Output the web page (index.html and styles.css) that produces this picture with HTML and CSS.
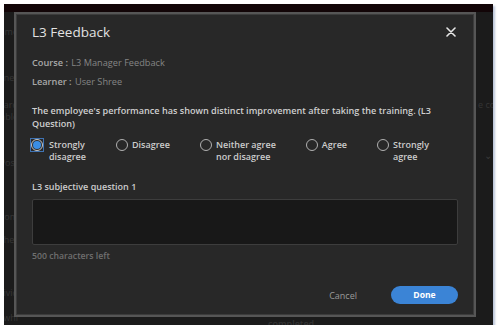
FILE: index.html
```html
<!DOCTYPE html>
<html lang="en">
<head>
<meta charset="utf-8">
<title>L3 Feedback</title>
<link rel="stylesheet" href="styles.css">
</head>
<body>
<div class="frame">
  <div class="topbar"></div>
  <div class="backdrop">
    <div class="bg-left">
      <span class="bg-line l1">Course name</span>
      <span class="bg-line l2">Learner</span>
      <span class="bg-line l3">Board</span>
      <span class="bg-line l4">Table</span>
      <span class="bg-line l5">Post</span>
      <span class="bg-line l6">From</span>
      <span class="bg-line l7">Other</span>
      <span class="bg-line l8">Individ</span>
      <span class="bg-line l9">Ywhi</span>
    </div>
    <div class="bg-right">
      <span class="bg-line r1">e co</span>
      <span class="bg-chev">&#8964;</span>
    </div>
    <div class="bg-bottom">completed</div>
  </div>

  <div class="modal" role="dialog" aria-labelledby="dlg-title">
    <div class="modal-head">
      <h1 id="dlg-title" class="modal-title">L3 Feedback</h1>
      <button class="close" aria-label="Close">
        <svg width="10" height="10" viewBox="0 0 10 10"><path d="M1 1 L9 9 M9 1 L1 9" stroke="#e6e6e6" stroke-width="1.6" stroke-linecap="round"/></svg>
      </button>
    </div>

    <div class="meta">
      <div class="meta-row"><span class="meta-label">Course :</span> <span class="meta-value">L3 Manager Feedback</span></div>
      <div class="meta-row second"><span class="meta-label">Learner :</span> <span class="meta-value">User Shree</span></div>
    </div>

    <p class="question">The employee's performance has shown distinct improvement after taking the training. (L3 Question)</p>

    <div class="options">
      <label class="option selected"><span class="radio-focus"><span class="radio checked"></span></span><span class="opt-text">Strongly<br>disagree</span></label>
      <label class="option"><span class="radio"></span><span class="opt-text">Disagree</span></label>
      <label class="option"><span class="radio"></span><span class="opt-text">Neither agree<br>nor disagree</span></label>
      <label class="option"><span class="radio"></span><span class="opt-text">Agree</span></label>
      <label class="option"><span class="radio"></span><span class="opt-text">Strongly<br>agree</span></label>
    </div>

    <div class="subj-label">L3 subjective question 1</div>
    <div class="textarea"></div>
    <div class="chars-left">500 characters left</div>

    <div class="actions">
      <button class="btn-cancel">Cancel</button>
      <button class="btn-done">Done</button>
    </div>
  </div>
</div>
</body>
</html>
```

FILE: styles.css
```css
* { box-sizing: border-box; }

html, body {
  margin: 0;
  padding: 0;
  background: #ffffff;
}

body {
  font-family: "Open Sans", "Noto Sans", sans-serif;
}

.frame {
  position: relative;
  margin: 4px 0 0 4px;
  width: 489px;
  height: 321px;
  overflow: hidden;
  background: #1b1b1b;
  box-shadow: 2px 2px 2px rgba(140, 158, 190, 0.6);
}

.topbar {
  height: 8px;
  background: #120507;
}

.backdrop {
  position: relative;
  height: 313px;
  color: #353535;
  font-size: 9px;
}

.bg-left {
  display: flex;
  flex-direction: column;
  align-items: flex-end;
  width: 14px;
  padding-top: 14px;
}

.bg-line { display: block; line-height: 12px; white-space: nowrap; }
.l2 { margin-top: 34px; }
.l3 { margin-top: 15px; }
.l4 { margin-top: 0; }
.l5 { margin-top: 34px; }
.l6 { margin-top: 42px; }
.l7 { margin-top: 11px; }
.l8 { margin-top: 41px; }
.l9 { margin-top: 13px; }

.bg-right {
  position: absolute;
  left: 474px;
  top: 87px;
  display: flex;
  flex-direction: column;
}
.bg-chev {
  margin: 38px 0 0 6px;
  font-size: 10px;
  line-height: 12px;
  color: #3a3a3a;
}

.bg-bottom {
  position: absolute;
  left: 264px;
  top: 305px;
  font-size: 9px;
  font-weight: 600;
  color: #333;
}

.modal {
  position: absolute;
  left: 10px;
  top: 8px;
  width: 462px;
  height: 305px;
  background: #282828;
  border: 2px solid #565656;
  box-shadow: inset 0 0 0 1px #3c3c3c;
  display: flex;
  flex-direction: column;
  padding: 9px 16px 11px 16px;
}

.modal-head {
  display: flex;
  justify-content: space-between;
  align-items: center;
  height: 18px;
}

.modal-title {
  margin: 0;
  font-size: 13.5px;
  line-height: 18px;
  font-weight: 500;
  color: #e2e2e2;
}

.close {
  background: none;
  border: 0;
  padding: 0;
  margin-right: 2px;
  width: 10px;
  height: 10px;
  display: flex;
}

.meta {
  margin-top: 15px;
  font-size: 9.2px;
  line-height: 13px;
}
.meta-row.second { margin-top: 6px; }
.meta-label { color: #a8a8a8; font-weight: 600; }
.meta-value { color: #858585; margin-left: 1px; }

.question {
  margin: 16px 0 0 0;
  font-size: 9.1px;
  line-height: 13px;
  font-weight: 600;
  color: #cfcfcf;
}

.options {
  display: flex;
  gap: 30px;
  margin-top: 9px;
  font-size: 9px;
  line-height: 12px;
  font-weight: 600;
  color: #cccccc;
}

.option {
  display: flex;
  align-items: flex-start;
  gap: 4px;
}

.radio {
  flex: none;
  width: 12px;
  height: 12px;
  border: 1px solid #b0b0b0;
  border-radius: 50%;
  display: flex;
  align-items: center;
  justify-content: center;
}

.radio.checked {
  border-color: #c8c8c8;
}
.radio.checked::after {
  content: "";
  width: 8px;
  height: 8px;
  border-radius: 50%;
  background: #3b8ee3;
}

.radio-focus {
  flex: none;
  margin: -1px 1px 0 -2px;
  padding: 0;
  border: 1px solid #3f73b3;
}

.subj-label {
  margin-top: 17px;
  font-size: 9px;
  line-height: 13px;
  font-weight: 600;
  color: #cccccc;
}

.textarea {
  margin-top: 6px;
  height: 46px;
  background: #181818;
  border: 1px solid #3d3d3d;
  border-radius: 2px;
}

.chars-left {
  margin-top: 5px;
  font-size: 8.7px;
  line-height: 12px;
  font-weight: 600;
  color: #6f6f6f;
}

.actions {
  margin-top: auto;
  display: flex;
  justify-content: flex-end;
  align-items: center;
  gap: 34px;
}

.btn-cancel {
  background: none;
  border: 0;
  padding: 0;
  font-family: inherit;
  font-size: 9px;
  font-weight: 500;
  color: #9a9a9a;
}

.btn-done {
  width: 67px;
  height: 18px;
  border: 0;
  border-radius: 9px;
  background: #3b84d6;
  color: #ffffff;
  font-family: inherit;
  font-size: 8.6px;
  font-weight: 700;
}
```
